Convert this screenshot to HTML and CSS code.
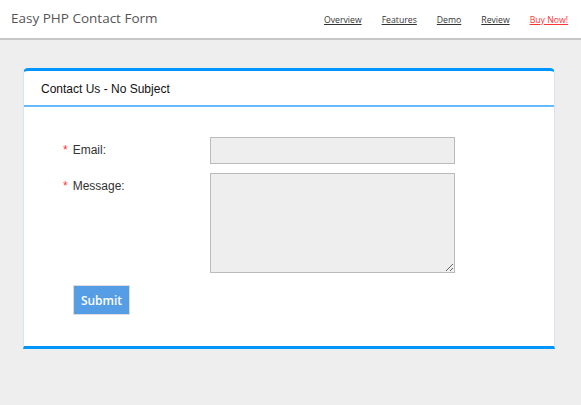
FILE: index.html
```html
<!DOCTYPE html>
<html>
<head>
<meta charset="utf-8">
<title>Easy PHP Contact Form</title>
<link rel="stylesheet" href="styles.css">
</head>
<body>
<header class="topbar">
  <div class="brand">Easy PHP Contact Form</div>
  <nav class="nav">
    <a href="#">Overview</a>
    <a href="#">Features</a>
    <a href="#">Demo</a>
    <a href="#">Review</a>
    <a href="#" class="buy">Buy Now!</a>
  </nav>
</header>
<main class="page">
  <section class="card">
    <div class="card-head">Contact Us - No Subject</div>
    <form class="card-body">
      <div class="grid">
        <label class="lbl"><span class="req">*</span>Email:</label>
        <input class="field" type="text">
        <label class="lbl"><span class="req">*</span>Message:</label>
        <textarea class="field area"></textarea>
      </div>
      <button type="button" class="submit">Submit</button>
    </form>
  </section>
</main>
</body>
</html>
```
FILE: styles.css
```css
html, body {
  margin: 0;
  padding: 0;
  background: #eeeeee;
  height: 100%;
}
.topbar {
  background: #ffffff;
  height: 38px;
  border-bottom: 2px solid #c6c6c6;
  display: flex;
  align-items: center;
  justify-content: space-between;
  padding: 0 13px 0 11px;
}
.brand {
  font-family: "Open Sans", sans-serif;
  font-size: 13.5px;
  color: #555555;
  margin-top: -2px;
}
.nav {
  display: flex;
  gap: 20px;
  margin-top: 2px;
}
.nav a {
  font-family: "Open Sans", sans-serif;
  font-size: 8.7px;
  color: #333333;
  text-decoration: underline;
}
.nav a.buy {
  color: #ff3333;
}
.page {
  padding: 28px 26px 0 23px;
}
.card {
  width: 532px;
  background: #ffffff;
  border-top: 3px solid #0096ff;
  border-bottom: 3px solid #0096ff;
  border-left: 1px solid #d6e6f6;
  border-right: 1px solid #dde3ea;
  border-radius: 5px 5px 0 0;
  box-sizing: border-box;
}
.card-head {
  height: 36px;
  display: flex;
  align-items: center;
  padding: 1px 0 0 17px;
  box-sizing: border-box;
  font-family: "Liberation Sans", Arial, sans-serif;
  font-size: 12px;
  color: #111111;
  border-bottom: 2px solid #66bbff;
}
.card-body {
  padding: 30px 0 31px 39px;
  margin: 0;
}
.grid {
  display: grid;
  grid-template-columns: 147px 245px;
  row-gap: 9px;
}
.lbl {
  font-family: "Liberation Sans", Arial, sans-serif;
  font-size: 12px;
  color: #333333;
  padding-top: 6px;
}
.req {
  color: #ff3333;
  margin-right: 5px;
}
.field {
  display: block;
  box-sizing: border-box;
  width: 245px;
  height: 27px;
  margin: 0;
  background: #eeeeee;
  border: 1px solid #bbbbbb;
}
.area {
  height: 100px;
  resize: both;
}
.submit {
  display: block;
  margin: 12px 0 0 10px;
  width: 57px;
  height: 30px;
  background: #559ee6;
  border: 1px solid #dddddd;
  color: #ffffff;
  font-family: "Open Sans", sans-serif;
  font-weight: 600;
  font-size: 12px;
  padding: 0;
}
```
